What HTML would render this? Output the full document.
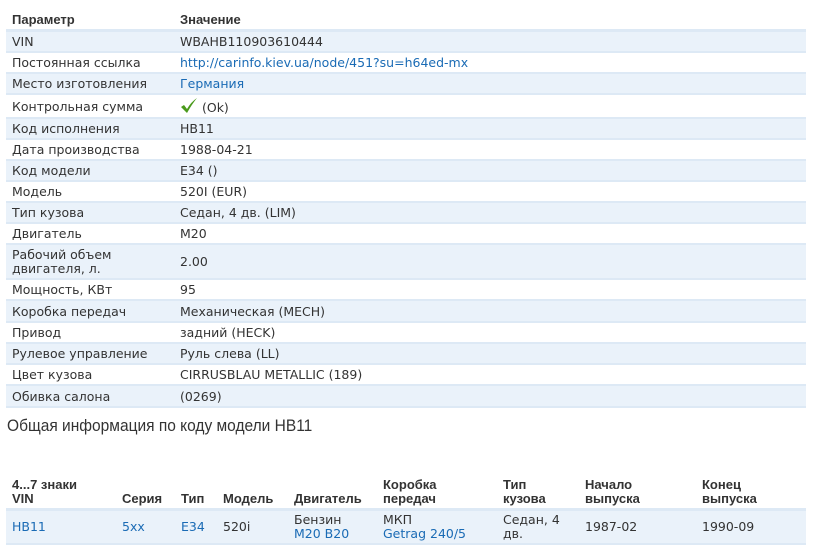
<!DOCTYPE html>
<html><head><meta charset="utf-8"><style>
body{margin:0;background:#fff;font-family:"DejaVu Sans","Liberation Sans",sans-serif;font-size:12.5px;color:#333;}
a{color:#1a6bb5;text-decoration:none}
table{border-collapse:collapse;position:absolute;left:6px;width:800px}
td,th{text-align:left;padding:0 6px;border-bottom:2px solid #dde9f5;vertical-align:middle}
th{font-weight:bold;font-family:"Liberation Sans",sans-serif;font-size:13px;color:#333}
#t1{top:9px}
#t1 td{height:19px}
#t1 tr.o td{background:#eaf2fa}
#t1 th{height:20px;border-bottom:3px solid #dde9f5}
.t{position:absolute;left:7px;top:417px;font-family:"Liberation Sans",sans-serif;font-size:16.5px;color:#333;transform:scaleX(.94);transform-origin:left}
#t2{top:474px;table-layout:fixed}
#t2 th{height:32px;line-height:14px;vertical-align:bottom;padding-bottom:2px;border-bottom:3px solid #dde9f5;white-space:nowrap}
#t2 td{background:#eaf2fa;height:32px;line-height:14px}
</style></head><body>
<table id="t1">
<tr><th style="width:156px">Параметр</th><th>Значение</th></tr>
<tr class="o"><td>VIN</td><td>WBAHB110903610444</td></tr>
<tr><td>Постоянная ссылка</td><td><a>http://carinfo.kiev.ua/node/451?su=h64ed-mx</a></td></tr>
<tr class="o"><td>Место изготовления</td><td><a>Германия</a></td></tr>
<tr><td style="height:22px">Контрольная сумма</td><td><svg width="18" height="16" viewBox="0 0 18 16" style="vertical-align:-2px"><path d="M1 9 L4 7 L7 11 Q11 4 17 0 Q12 6 7 15 Z" fill="#4a9a1c"/></svg> (Ok)</td></tr>
<tr class="o"><td>Код исполнения</td><td>HB11</td></tr>
<tr><td>Дата производства</td><td>1988-04-21</td></tr>
<tr class="o"><td>Код модели</td><td>E34 ()</td></tr>
<tr><td>Модель</td><td>520I (EUR)</td></tr>
<tr class="o"><td>Тип кузова</td><td>Седан, 4 дв. (LIM)</td></tr>
<tr><td>Двигатель</td><td>M20</td></tr>
<tr class="o"><td style="height:33px;line-height:14px">Рабочий объем двигателя, л.</td><td>2.00</td></tr>
<tr><td>Мощность, КВт</td><td>95</td></tr>
<tr class="o"><td style="height:20px">Коробка передач</td><td>Механическая (MECH)</td></tr>
<tr><td>Привод</td><td>задний (HECK)</td></tr>
<tr class="o"><td>Рулевое управление</td><td>Руль слева (LL)</td></tr>
<tr><td>Цвет кузова</td><td>CIRRUSBLAU METALLIC (189)</td></tr>
<tr class="o"><td style="height:20px">Обивка салона</td><td>(0269)</td></tr>
</table>
<div class="t">Общая информация по коду модели HB11</div>
<table id="t2">
<tr><th style="width:98px">4...7 знаки<br>VIN</th><th style="width:47px">Серия</th><th style="width:30px">Тип</th><th style="width:59px">Модель</th><th style="width:77px">Двигатель</th><th style="width:108px">Коробка<br>передач</th><th style="width:70px">Тип<br>кузова</th><th style="width:105px">Начало<br>выпуска</th><th>Конец<br>выпуска</th></tr>
<tr><td><a>HB11</a></td><td><a>5xx</a></td><td><a>E34</a></td><td>520i</td><td>Бензин<br><a>M20 B20</a></td><td>МКП<br><a>Getrag 240/5</a></td><td>Седан, 4 дв.</td><td>1987-02</td><td>1990-09</td></tr>
</table>
</body></html>
